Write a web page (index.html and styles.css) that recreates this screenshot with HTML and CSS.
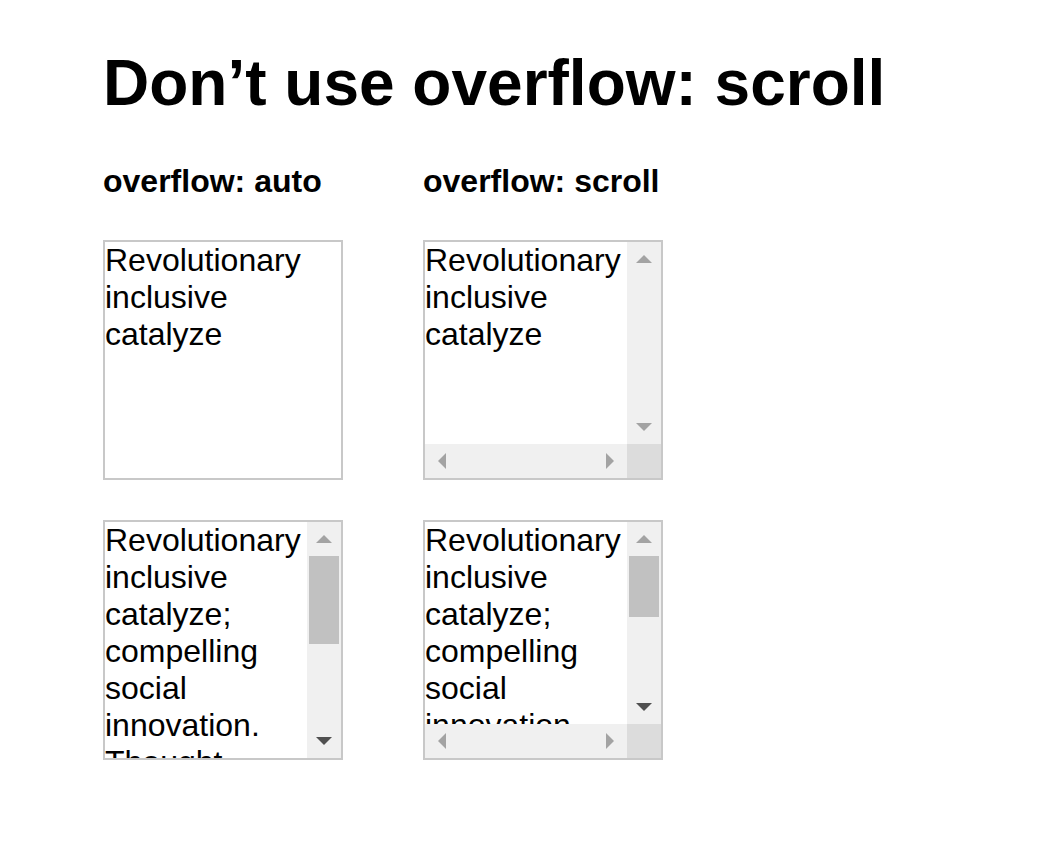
FILE: index.html
```html
<!DOCTYPE html>
<html lang="en">
<head>
    <meta charset="utf-8">
    <title>Don’t use overflow: scroll</title>
    <link rel="stylesheet" href="styles.css">
</head>
<body>
    <main class="page">
        <h1 class="title">Don’t use overflow: scroll</h1>

        <div class="demo">
            <section class="column">
                <h2 class="label">overflow: auto</h2>

                <!-- short text: auto shows no bars at all -->
                <div class="frame">
                    <div class="frame-body">Revolutionary inclusive catalyze</div>
                </div>

                <!-- long text: auto only adds the bar it needs -->
                <div class="frame frame-v">
                    <div class="frame-body">Revolutionary inclusive catalyze; compelling social innovation. Thought leadership empower communities.</div>
                    <div class="vbar">
                        <span class="btn"><i class="arrow up"></i></span>
                        <span class="track"><b class="thumb thumb-tall"></b></span>
                        <span class="btn"><i class="arrow down on"></i></span>
                    </div>
                </div>
            </section>

            <section class="column">
                <h2 class="label">overflow: scroll</h2>

                <!-- scroll always draws both bars, even when nothing overflows -->
                <div class="frame frame-vh">
                    <div class="frame-body">Revolutionary inclusive catalyze</div>
                    <div class="vbar">
                        <span class="btn"><i class="arrow up"></i></span>
                        <span class="track"></span>
                        <span class="btn"><i class="arrow down"></i></span>
                    </div>
                    <div class="hbar">
                        <span class="btn"><i class="arrow left"></i></span>
                        <span class="track"></span>
                        <span class="btn"><i class="arrow right"></i></span>
                    </div>
                    <div class="corner"></div>
                </div>

                <div class="frame frame-vh">
                    <div class="frame-body">Revolutionary inclusive catalyze; compelling social innovation. Thought leadership empower communities.</div>
                    <div class="vbar">
                        <span class="btn"><i class="arrow up"></i></span>
                        <span class="track"><b class="thumb thumb-short"></b></span>
                        <span class="btn"><i class="arrow down on"></i></span>
                    </div>
                    <div class="hbar">
                        <span class="btn"><i class="arrow left"></i></span>
                        <span class="track"></span>
                        <span class="btn"><i class="arrow right"></i></span>
                    </div>
                    <div class="corner"></div>
                </div>
            </section>
        </div>
    </main>
</body>
</html>
```

FILE: styles.css
```css
body {
    margin: 0;
    background: #fff;
    color: #000;
    font-family: 'Liberation Sans', Arial, sans-serif;
}

.page {
    padding: 46px 0 0 103px;
}

.title {
    margin: 0 0 43px;
    font-size: 64px;
    line-height: normal;
    font-weight: bold;
}

.demo {
    display: flex;
    gap: 80px;
}

.column {
    display: flex;
    flex-direction: column;
    gap: 40px;
    width: 240px;
}

.label {
    margin: 0;
    font-size: 32px;
    line-height: normal;
    font-weight: bold;
    white-space: nowrap;
}

/* the scroll box */
.frame {
    display: grid;
    grid-template-columns: 1fr;
    grid-template-rows: 1fr;
    width: 240px;
    height: 240px;
    box-sizing: border-box;
    border: 2px solid #c8c8c8;
    overflow: hidden;
}

.frame-v {
    grid-template-columns: 1fr 34px;
}

.frame-vh {
    grid-template-columns: 1fr 34px;
    grid-template-rows: 1fr 34px;
}

.frame-body {
    overflow: hidden;
    font-size: 32px;
    line-height: normal;
    min-width: 0;
    min-height: 0;
}

.frame-v .frame-body {
    grid-row: 1;
}

/* scrollbars */
.vbar, .hbar {
    display: flex;
    background: #f0f0f0;
}

.vbar {
    flex-direction: column;
}

.frame-v .vbar {
    grid-row: 1;
}

.btn {
    flex: 0 0 34px;
    width: 34px;
    height: 34px;
    display: flex;
    align-items: center;
    justify-content: center;
}

.track {
    flex: 1;
    display: flex;
    flex-direction: column;
    align-items: center;
}

.thumb {
    width: 30px;
    background: #c1c1c1;
}

.thumb-tall { height: 88px; }
.thumb-short { height: 61px; }

.corner {
    background: #dcdcdc;
}

/* arrow glyphs */
.arrow {
    width: 0;
    height: 0;
    border: 8px solid transparent;
}

.arrow.up {
    border-top: 0;
    border-bottom-color: #a3a3a3;
}

.arrow.down {
    border-bottom: 0;
    border-top-color: #a3a3a3;
}

.arrow.left {
    border-left: 0;
    border-right-color: #a3a3a3;
}

.arrow.right {
    border-right: 0;
    border-left-color: #a3a3a3;
}

.arrow.down.on {
    border-top-color: #505050;
}
```
